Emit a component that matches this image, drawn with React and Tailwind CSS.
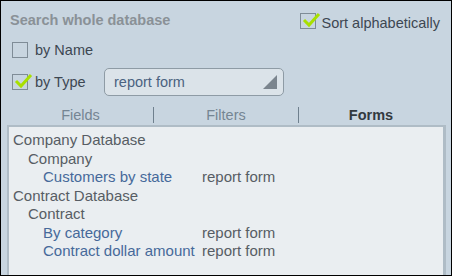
import React from "react";

function Box({ checked }) {
  return (
    <div className="relative w-[16px] h-[16px] border border-[#7f8c97] shrink-0">
      {checked && (
        <svg
          className="absolute left-[0px] top-[-3px] overflow-visible"
          width="20"
          height="18"
          viewBox="0 0 20 18"
        >
          <path
            d="M3 9 L8 14 L18 3"
            fill="none"
            stroke="#a8e000"
            strokeWidth="3"
            strokeLinecap="butt"
            strokeLinejoin="miter"
          />
        </svg>
      )}
    </div>
  );
}

export default function App() {
  return (
    <div className="w-[452px] h-[276px] border border-black bg-[#c8d5e0] flex flex-col overflow-hidden font-['Liberation_Sans',Arial,sans-serif] text-[14px]">
      <div className="flex justify-between h-[30px] pl-[9px] pr-[11px]">
        <div className="pt-[11px] leading-[16px] font-bold text-[14.5px] text-[#8a9197]">
          Search whole database
        </div>
        <div className="flex items-start pt-[12px] gap-[6px]">
          <Box checked />
          <span className="leading-[16px] mt-[2px] text-[14.5px] text-[#3d4752]">
            Sort alphabetically
          </span>
        </div>
      </div>

      <div className="flex items-center h-[16px] mt-[11px] pl-[11px] gap-[7px]">
        <Box />
        <span className="leading-[16px] text-[14.5px] text-[#3d4752]">by Name</span>
      </div>

      <div className="flex items-center h-[28px] mt-[10px] pl-[11px]">
        <Box checked />
        <span className="leading-[16px] text-[14.5px] text-[#3d4752] ml-[7px] w-[69px]">
          by Type
        </span>
        <div className="w-[180px] h-[28px] rounded-[5px] border border-[#8e9ba5] bg-[#dbe3e9] flex items-center justify-between pl-[9px] pr-[6px]">
          <span className="leading-[16px] text-[14.5px] text-[#4a6280]">report form</span>
          <svg width="14" height="14" viewBox="0 0 14 14">
            <polygon points="14,0 14,14 0,14" fill="#7b858e" />
          </svg>
        </div>
      </div>

      <div className="grid grid-cols-3 w-[435px] ml-[7px] mt-[9px] h-[19px] text-[14.5px]">
        <div className="mt-[2px] h-[16px] flex items-center justify-center leading-[16px] text-[#758593]">
          Fields
        </div>
        <div className="mt-[2px] h-[16px] flex items-center justify-center leading-[16px] text-[#758593] border-l border-[#6f808e]">
          Filters
        </div>
        <div className="mt-[2px] h-[16px] flex items-center justify-center leading-[16px] font-bold text-[#333a40] border-l border-[#6f808e]">
          Forms
        </div>
      </div>

      <div className="flex-1 ml-[6px] w-[439px] mt-[1px] bg-[#eaeef1] border-t-2 border-l-2 border-r-[3px] border-[#afbcc6] pt-[4px] pl-[4px] text-[15px] text-[#575d64] leading-[18.5px]">
        <div>Company Database</div>
        <div className="pl-[15px]">Company</div>
        <div className="pl-[30px] flex">
          <span className="w-[159px] text-[#46699a]">Customers by state</span>
          <span>report form</span>
        </div>
        <div>Contract Database</div>
        <div className="pl-[15px]">Contract</div>
        <div className="pl-[30px] flex">
          <span className="w-[159px] text-[#46699a]">By category</span>
          <span>report form</span>
        </div>
        <div className="pl-[30px] flex">
          <span className="w-[159px] text-[#46699a]">Contract dollar amount</span>
          <span>report form</span>
        </div>
      </div>
    </div>
  );
}
